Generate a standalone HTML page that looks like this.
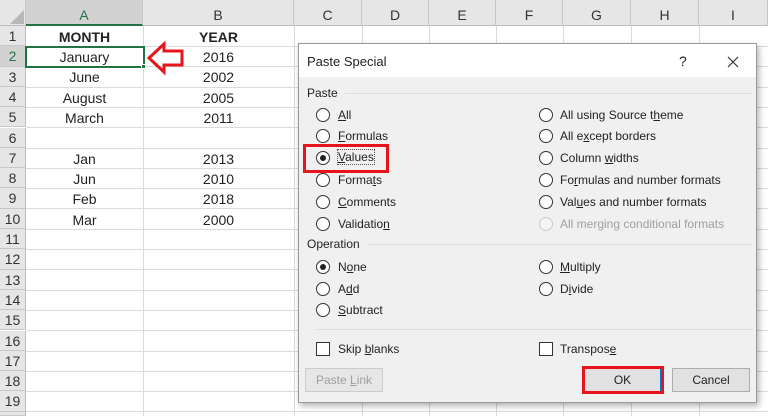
<!DOCTYPE html>
<html><head><style>
*{margin:0;padding:0;box-sizing:border-box}
html,body{width:768px;height:416px;overflow:hidden}
body{background:#fff;font-family:"Liberation Sans",sans-serif;position:relative;font-size:13px;color:#222}
.abs{position:absolute}
.colh{position:absolute;top:0;height:26px;background:#e6e6e6;border-right:1px solid #c8c8c8;border-bottom:1px solid #bdbdbd;text-align:center;line-height:30px;font-size:14px;color:#333}
.rowh{position:absolute;left:0;width:26px;background:#e6e6e6;border-bottom:1px solid #c8c8c8;border-right:1px solid #bdbdbd;text-align:center;font-size:14px;color:#333}
.hl{position:absolute;left:26px;right:0;height:1px;background:#dadada}
.vl{position:absolute;top:26px;bottom:0;width:1px;background:#dadada}
.cell{position:absolute;text-align:center;font-size:14px;color:#222}
.dlg{position:absolute;left:298px;top:43px;width:459px;height:360px;background:#f0f0f0;border:1px solid #999;box-shadow:2px 3px 6px rgba(0,0,0,.3)}
.t{position:absolute;font-size:12px;color:#222;white-space:nowrap}
.r{position:absolute;width:14px;height:14px;border:1px solid #333;border-radius:50%;background:#fff}
.r.on::after{content:"";position:absolute;left:3px;top:3px;width:6px;height:6px;border-radius:50%;background:#222}
.r.dis{border-color:#ccc;background:#f3f3f3}
.cb{position:absolute;width:14px;height:14px;border:1px solid #333;background:#fff}
.btn{position:absolute;height:24px;border:1px solid #adadad;background:#e1e1e1;font-size:12px;text-align:center;line-height:22px}
u{text-decoration:underline}
</style></head><body>
<div class="colh" style="left:0;width:26px;background:#e6e6e6"></div>
<svg class="abs" style="left:10px;top:10px" width="14" height="14"><polygon points="14,0 14,14 0,14" fill="#b8b8b8"/></svg>
<div class="colh" style="left:26px;width:117px;background:#d2d2d2;border-bottom:2px solid #217346;color:#217346">A</div>
<div class="colh" style="left:143px;width:151px">B</div>
<div class="colh" style="left:294px;width:68px">C</div>
<div class="colh" style="left:362px;width:67px">D</div>
<div class="colh" style="left:429px;width:67px">E</div>
<div class="colh" style="left:496px;width:67px">F</div>
<div class="colh" style="left:563px;width:68px">G</div>
<div class="colh" style="left:631px;width:68px">H</div>
<div class="colh" style="left:699px;width:69px">I</div>
<div id="rows"></div>
<div class="vl" style="left:143px"></div><div class="vl" style="left:294px"></div><div class="vl" style="left:362px"></div><div class="vl" style="left:429px"></div><div class="vl" style="left:496px"></div><div class="vl" style="left:563px"></div><div class="vl" style="left:631px"></div><div class="vl" style="left:699px"></div>
<script>
var h='';for(var i=0;i<19;i++){var y=26+i*20.3;h+='<div class="rowh" style="top:'+y+'px;height:20.3px;line-height:21px;'+(i==1?'background:#d2d2d2;color:#217346':'')+'">'+(i+1)+'</div><div class="hl" style="top:'+(y+20)+'px"></div>';}
h+='<div class="rowh" style="top:412px;height:4px"></div>';
document.getElementById('rows').innerHTML=h;
</script>
<div class="cell" style="left:26px;width:117px;top:29px;font-weight:bold">MONTH</div>
<div class="cell" style="left:143px;width:151px;top:29px;font-weight:bold">YEAR</div>
<div class="abs" style="left:25px;top:46px;width:120px;height:22px;border:2px solid #217346"></div>
<div class="abs" style="left:141px;top:64px;width:5px;height:5px;background:#217346;border:1px solid #fff"></div>
<div class="cell" style="left:26px;width:117px;top:49px">January</div><div class="cell" style="left:143px;width:151px;top:49px">2016</div>
<div class="cell" style="left:26px;width:117px;top:69px">June</div><div class="cell" style="left:143px;width:151px;top:69px">2002</div>
<div class="cell" style="left:26px;width:117px;top:90px">August</div><div class="cell" style="left:143px;width:151px;top:90px">2005</div>
<div class="cell" style="left:26px;width:117px;top:110px">March</div><div class="cell" style="left:143px;width:151px;top:110px">2011</div>
<div class="cell" style="left:26px;width:117px;top:151px">Jan</div><div class="cell" style="left:143px;width:151px;top:151px">2013</div>
<div class="cell" style="left:26px;width:117px;top:171px">Jun</div><div class="cell" style="left:143px;width:151px;top:171px">2010</div>
<div class="cell" style="left:26px;width:117px;top:191px">Feb</div><div class="cell" style="left:143px;width:151px;top:191px">2018</div>
<div class="cell" style="left:26px;width:117px;top:212px">Mar</div><div class="cell" style="left:143px;width:151px;top:212px">2000</div>
<svg class="abs" style="left:146px;top:40px" width="40" height="36"><polygon points="3,18 18,4 18,11 36,11 36,25 18,25 18,32" fill="none" stroke="#e8141c" stroke-width="3" stroke-linejoin="miter"/></svg>

<div class="dlg">
<div class="abs" style="left:0;top:0;width:457px;height:33px;background:#fff"></div>
<div class="t" style="left:8px;top:10px;font-size:13px">Paste Special</div>
<div class="t" style="left:380px;top:9px;font-size:14px">?</div>
<svg class="abs" style="left:428px;top:12px" width="12" height="12"><path d="M1 1L11 11M11 1L1 11" stroke="#333" stroke-width="1.2"/></svg>
<div class="t" style="left:8px;top:42px">Paste</div><div class="abs" style="left:46px;top:49px;width:408px;height:1px;background:#ddd"></div>
<div class="r" style="left:17px;top:64px"></div><div class="t" style="left:39px;top:64px"><u>A</u>ll</div>
<div class="r" style="left:17px;top:85px"></div><div class="t" style="left:39px;top:85px"><u>F</u>ormulas</div>
<div class="r on" style="left:17px;top:107px"></div><div class="t" style="left:39px;top:106px;outline:1px dotted #555"><u>V</u>alues</div>
<div class="r" style="left:17px;top:129px"></div><div class="t" style="left:39px;top:129px">Forma<u>t</u>s</div>
<div class="r" style="left:17px;top:151px"></div><div class="t" style="left:39px;top:151px"><u>C</u>omments</div>
<div class="r" style="left:17px;top:173px"></div><div class="t" style="left:39px;top:173px">Validatio<u>n</u></div>
<div class="r" style="left:240px;top:64px"></div><div class="t" style="left:261px;top:64px">All using Source t<u>h</u>eme</div>
<div class="r" style="left:240px;top:85px"></div><div class="t" style="left:261px;top:85px">All e<u>x</u>cept borders</div>
<div class="r" style="left:240px;top:107px"></div><div class="t" style="left:261px;top:107px">Column <u>w</u>idths</div>
<div class="r" style="left:240px;top:129px"></div><div class="t" style="left:261px;top:129px">Fo<u>r</u>mulas and number formats</div>
<div class="r" style="left:240px;top:151px"></div><div class="t" style="left:261px;top:151px">Val<u>u</u>es and number formats</div>
<div class="r dis" style="left:240px;top:173px"></div><div class="t" style="left:261px;top:173px;color:#a0a0a0">All merging conditional formats</div>
<div class="abs" style="left:4px;top:100px;width:86px;height:29px;border:3px solid #e8141c"></div>
<div class="t" style="left:8px;top:193px">Operation</div><div class="abs" style="left:68px;top:200px;width:386px;height:1px;background:#ddd"></div>
<div class="r on" style="left:17px;top:216px"></div><div class="t" style="left:39px;top:216px">N<u>o</u>ne</div>
<div class="r" style="left:17px;top:238px"></div><div class="t" style="left:39px;top:238px">A<u>d</u>d</div>
<div class="r" style="left:17px;top:259px"></div><div class="t" style="left:39px;top:259px"><u>S</u>ubtract</div>
<div class="r" style="left:240px;top:216px"></div><div class="t" style="left:261px;top:216px"><u>M</u>ultiply</div>
<div class="r" style="left:240px;top:238px"></div><div class="t" style="left:261px;top:238px">D<u>i</u>vide</div>
<div class="abs" style="left:17px;top:285px;width:437px;height:1px;background:#ddd"></div>
<div class="cb" style="left:17px;top:298px"></div><div class="t" style="left:39px;top:298px">Skip <u>b</u>lanks</div>
<div class="cb" style="left:240px;top:298px"></div><div class="t" style="left:261px;top:298px">Transpos<u>e</u></div>
<div class="btn" style="left:6px;top:324px;width:78px;color:#a0a0a0;background:#e6e6e6;border-color:#ccc">Paste <u>L</u>ink</div>
<div class="btn" style="left:285px;top:324px;width:77px;border-color:#0078d7">OK</div>
<div class="abs" style="left:283px;top:322px;width:82px;height:28px;border:3px solid #e8141c"></div>
<div class="btn" style="left:373px;top:324px;width:78px">Cancel</div>
</div>
</body></html>
